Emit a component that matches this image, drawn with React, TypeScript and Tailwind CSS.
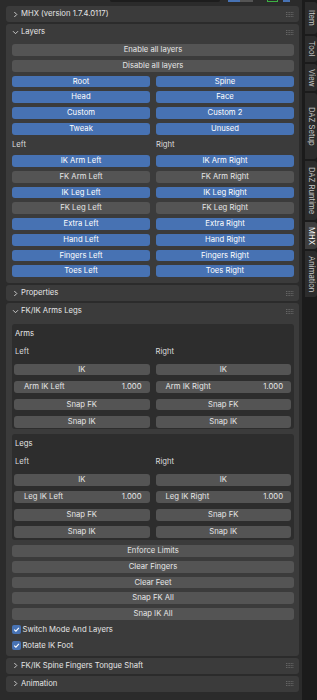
import type { ReactNode } from 'react'

const LAYER_PAIRS: [string, string][] = [
  ['Root', 'Spine'],
  ['Head', 'Face'],
  ['Custom', 'Custom 2'],
  ['Tweak', 'Unused'],
]

const SIDE_LAYERS: { l: string; r: string; on: boolean }[] = [
  { l: 'IK Arm Left', r: 'IK Arm Right', on: true },
  { l: 'FK Arm Left', r: 'FK Arm Right', on: false },
  { l: 'IK Leg Left', r: 'IK Leg Right', on: true },
  { l: 'FK Leg Left', r: 'FK Leg Right', on: false },
  { l: 'Extra Left', r: 'Extra Right', on: true },
  { l: 'Hand Left', r: 'Hand Right', on: true },
  { l: 'Fingers Left', r: 'Fingers Right', on: true },
  { l: 'Toes Left', r: 'Toes Right', on: true },
]

const TABS: { name: string; h: string; active?: boolean }[] = [
  { name: 'Item', h: 'h-[32px]' },
  { name: 'Tool', h: 'h-[26px]' },
  { name: 'View', h: 'h-[27px]' },
  { name: 'DAZ Setup', h: 'h-[66px]' },
  { name: 'DAZ Runtime', h: 'h-[59px]' },
  { name: 'MHX', h: 'h-[27px]', active: true },
  { name: 'Animation', h: 'h-[46px]' },
]

function Chevron({ open }: { open: boolean }) {
  return (
    <svg width="7" height="7" viewBox="0 0 7 7" className="shrink-0" fill="none">
      {open ? (
        <path d="M1 2.2 L3.5 4.7 L6 2.2" stroke="#d8d8d8" strokeWidth="0.9" />
      ) : (
        <path d="M2.3 1 L4.8 3.5 L2.3 6" stroke="#d8d8d8" strokeWidth="0.9" />
      )}
    </svg>
  )
}

function Grip() {
  return (
    <svg width="8" height="5" viewBox="0 0 8 5" className="shrink-0">
      <path d="M0 0.5H8M0 2.5H8M0 4.5H8" stroke="#707070" strokeWidth="0.8" strokeDasharray="1 0.6" />
    </svg>
  )
}

function Panel({ title, open = false, children }: { title: string; open?: boolean; children?: ReactNode }) {
  return (
    <div className="rounded-[3px] bg-[#3b3b3b]">
      <div className="flex items-center h-[16px] pl-[6px] pr-[5px] gap-[2px] text-[#e6e6e6]">
        <Chevron open={open} />
        <span className="flex-1 whitespace-nowrap">{title}</span>
        <Grip />
      </div>
      {open && children}
    </div>
  )
}

function Btn({ children, on = false }: { children: ReactNode; on?: boolean }) {
  return (
    <div
      className={
        on
          ? 'h-[11.75px] rounded-[3px] bg-[#4772b3] text-white flex items-center justify-center whitespace-nowrap'
          : 'h-[11.75px] rounded-[3px] bg-[#545454] text-[#e6e6e6] flex items-center justify-center whitespace-nowrap'
      }
    >
      {children}
    </div>
  )
}

function NumField({ label, value }: { label: string; value: string }) {
  return (
    <div className="h-[11.75px] rounded-[3px] bg-[#545454] text-[#e6e6e6] flex items-center justify-between pl-[10px] pr-[8px] whitespace-nowrap">
      <span>{label}</span>
      <span>{value}</span>
    </div>
  )
}

function LimbBox({ title, limb }: { title: string; limb: string }) {
  return (
    <div className="rounded-[3px] bg-[#2d2d2d] pl-[2px] pr-[3px] pt-[4px] pb-[1.5px] flex flex-col gap-[5.75px]">
      <div className="h-[12px] flex items-center pl-[1px] text-[#e6e6e6]">{title}</div>
      <div className="grid grid-cols-2 gap-x-[6px] gap-y-[5.75px]">
        <div className="h-[12px] flex items-center pl-[1px] text-[#dcdcdc]">Left</div>
        <div className="h-[12px] flex items-center text-[#dcdcdc]">Right</div>
        <Btn>IK</Btn>
        <Btn>IK</Btn>
        <NumField label={`${limb} IK Left`} value="1.000" />
        <NumField label={`${limb} IK Right`} value="1.000" />
        <Btn>Snap FK</Btn>
        <Btn>Snap FK</Btn>
        <Btn>Snap IK</Btn>
        <Btn>Snap IK</Btn>
      </div>
    </div>
  )
}

function Check({ label }: { label: string }) {
  return (
    <div className="h-[11.75px] flex items-center gap-[2px] text-[#e6e6e6]">
      <span className="w-[8.5px] h-[8.5px] rounded-[2px] bg-[#4772b3] flex items-center justify-center">
        <svg width="7" height="7" viewBox="0 0 7 7" fill="none">
          <path d="M1.2 3.6 L2.9 5.2 L5.9 1.8" stroke="white" strokeWidth="1.1" />
        </svg>
      </span>
      <span>{label}</span>
    </div>
  )
}

export default function App() {
  return (
    <div className="w-[317px] h-[700px] flex bg-[#2b2b2b] overflow-hidden font-[Inter,sans-serif] text-[7.7px] leading-none">
      <div className="w-[302px] flex flex-col">
        {/* cut-off header widgets */}
        <div className="h-[2px] flex">
          <div className="ml-[110px] w-[110px] bg-[#1d1d1d] rounded-b-[2px]" />
          <div className="ml-[8px] w-[12px] bg-[#4772b3]" />
          <div className="w-[13px] bg-[#545454]" />
          <div className="ml-[14px] w-[11px] border-x border-b border-[#3cb043]" />
          <div className="ml-[5px] w-[7px] bg-[#4772b3]" />
        </div>

        <div className="pt-[4px] pl-[6px] pr-[3px] flex flex-col gap-[2px]">
          <Panel title="MHX (version 1.7.4.0117)" />

          <Panel title="Layers" open>
            <div className="pl-[6px] pr-[5px] pt-[4px] pb-[6px] flex flex-col gap-[4px]">
              <Btn>Enable all layers</Btn>
              <Btn>Disable all layers</Btn>
              <div className="grid grid-cols-2 gap-x-[6px] gap-y-[4px]">
                {LAYER_PAIRS.map(([a, b]) => (
                  <>
                    <Btn key={a} on>{a}</Btn>
                    <Btn key={b} on>{b}</Btn>
                  </>
                ))}
                <div className="h-[12.5px] flex items-center text-[#dcdcdc]">Left</div>
                <div className="h-[12.5px] flex items-center text-[#dcdcdc]">Right</div>
                {SIDE_LAYERS.map((s) => (
                  <>
                    <Btn key={s.l} on={s.on}>{s.l}</Btn>
                    <Btn key={s.r} on={s.on}>{s.r}</Btn>
                  </>
                ))}
              </div>
            </div>
          </Panel>

          <Panel title="Properties" />

          <Panel title="FK/IK Arms Legs" open>
            <div className="pl-[6px] pr-[5px] pt-[5px] pb-[4.5px] flex flex-col">
              <LimbBox title="Arms" limb="Arm" />
              <div className="mt-[5px]">
                <LimbBox title="Legs" limb="Leg" />
              </div>
              <div className="mt-[5.5px] flex flex-col gap-[4px]">
                <Btn>Enforce Limits</Btn>
                <Btn>Clear Fingers</Btn>
                <Btn>Clear Feet</Btn>
                <Btn>Snap FK All</Btn>
                <Btn>Snap IK All</Btn>
                <Check label="Switch Mode And Layers" />
                <Check label="Rotate IK Foot" />
              </div>
            </div>
          </Panel>

          <Panel title="FK/IK Spine Fingers Tongue Shaft" />
          <Panel title="Animation" />
        </div>
      </div>

      {/* sidebar tabs */}
      <div className="w-[15px] bg-[#1b1b1b] flex flex-col pl-[3px] pt-[2px] gap-[2px]">
        {TABS.map((t) => (
          <div
            key={t.name}
            className={
              t.active
                ? `${t.h} rounded-r-[3px] bg-[#3d3d3d] text-white flex items-center justify-center`
                : `${t.h} rounded-r-[3px] bg-[#2c2c2c] text-[#c8c8c8] flex items-center justify-center`
            }
          >
            <span className="[writing-mode:vertical-rl] whitespace-nowrap">{t.name}</span>
          </div>
        ))}
      </div>
    </div>
  )
}
